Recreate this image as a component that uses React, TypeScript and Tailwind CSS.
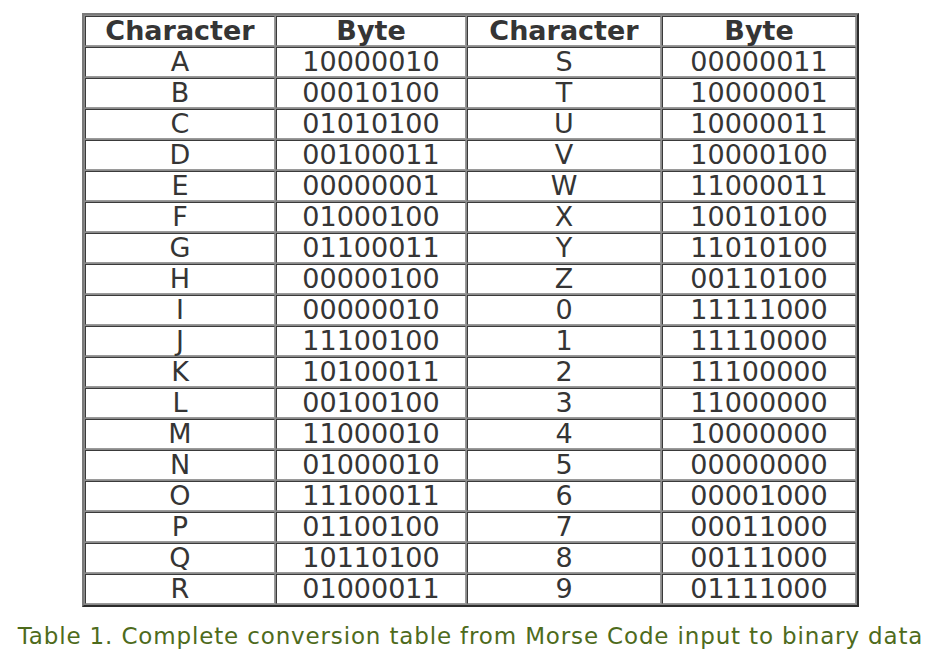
import React from 'react';

const left: [string, string][] = [
  ['A', '10000010'], ['B', '00010100'], ['C', '01010100'], ['D', '00100011'],
  ['E', '00000001'], ['F', '01000100'], ['G', '01100011'], ['H', '00000100'],
  ['I', '00000010'], ['J', '11100100'], ['K', '10100011'], ['L', '00100100'],
  ['M', '11000010'], ['N', '01000010'], ['O', '11100011'], ['P', '01100100'],
  ['Q', '10110100'], ['R', '01000011'],
];

const right: [string, string][] = [
  ['S', '00000011'], ['T', '10000001'], ['U', '10000011'], ['V', '10000100'],
  ['W', '11000011'], ['X', '10010100'], ['Y', '11010100'], ['Z', '00110100'],
  ['0', '11111000'], ['1', '11110000'], ['2', '11100000'], ['3', '11000000'],
  ['4', '10000000'], ['5', '00000000'], ['6', '00001000'], ['7', '00011000'],
  ['8', '00111000'], ['9', '01111000'],
];

const cell =
  'border border-t-[#3a3a3a] border-l-[#3a3a3a] border-b-[#9a9a9a] border-r-[#9a9a9a] p-0 text-center';

export default function App() {
  return (
    <div className="flex flex-col items-center bg-white pt-[13px] min-h-[663px] font-['DejaVu_Sans',Verdana,sans-serif] text-[#353535]">
      <table className="border-separate border-spacing-[1px] border-2 border-t-[#7a7a7a] border-l-[#7a7a7a] border-b-[#2c2c2c] border-r-[#2c2c2c] bg-[#8a8a8a] w-[777px] table-fixed">
        <thead>
          <tr className="h-[30px] bg-white">
            <th className={`${cell} w-[190px] text-[27px] font-bold leading-[28px]`}>Character</th>
            <th className={`${cell} w-[190px] text-[27px] font-bold leading-[28px]`}>Byte</th>
            <th className={`${cell} w-[194px] text-[27px] font-bold leading-[28px]`}>Character</th>
            <th className={`${cell} text-[27px] font-bold leading-[28px]`}>Byte</th>
          </tr>
        </thead>
        <tbody>
          {left.map((l, i) => (
            <tr key={l[0]} className="h-[30px] bg-white text-[27px] leading-[28px]">
              <td className={cell}>{l[0]}</td>
              <td className={cell}>{l[1]}</td>
              <td className={cell}>{right[i][0]}</td>
              <td className={cell}>{right[i][1]}</td>
            </tr>
          ))}
        </tbody>
      </table>
      <p className="mt-[15px] text-[23px] leading-[28px] tracking-[0.85px] text-[#4e6b1c]">
        Table 1. Complete conversion table from Morse Code input to binary data
      </p>
    </div>
  );
}
